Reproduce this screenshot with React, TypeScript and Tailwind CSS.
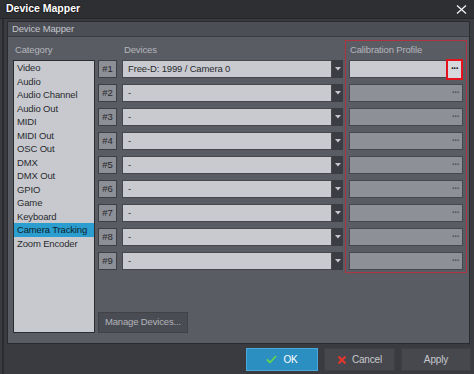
import React from 'react';

const categories = [
  'Video',
  'Audio',
  'Audio Channel',
  'Audio Out',
  'MIDI',
  'MIDI Out',
  'OSC Out',
  'DMX',
  'DMX Out',
  'GPIO',
  'Game',
  'Keyboard',
  'Camera Tracking',
  'Zoom Encoder',
];

const devices = ['Free-D: 1999 / Camera 0', '-', '-', '-', '-', '-', '-', '-', '-'];

function Dots({ className }: { className: string }) {
  return <span className={`text-[10px] leading-none tracking-[-1px] font-bold ${className}`}>···</span>;
}

function App() {
  return (
    <div className="w-[474px] h-[374px] overflow-hidden bg-[#3a3b40] flex flex-col text-[9.5px] tracking-[-0.15px] font-['Liberation_Sans',Arial,sans-serif]">
      {/* title bar */}
      <div className="h-[19px] bg-[#2e2f33] flex items-center justify-between pl-[6px] pr-[7px] border-b border-[#25262a]">
        <span className="text-white font-bold text-[10.5px] tracking-normal [text-shadow:0_0_2px_#000]">Device Mapper</span>
        <svg width="11" height="9" viewBox="0 0 11 9" className="mt-[1px]">
          <path d="M1 0.5 L10 8.5 M10 0.5 L1 8.5" stroke="#f2f2f2" strokeWidth="1.3" />
        </svg>
      </div>

      <div className="flex-1 flex flex-col border-l-2 border-[#2a2b2f] ml-[2px]">
        {/* group box */}
        <div className="mt-[2px] ml-[3px] w-[463px] h-[323px] border border-[#2a2b2f] flex flex-col">
          <div className="h-[15px] bg-[#4c4e55] border-b border-[#3a3c41] flex items-center pl-[4px] text-[#c3c5cb]">
            Device Mapper
          </div>
          <div className="flex-1 bg-[#5a5c64] flex pl-[5px] pt-[3px] pb-[10px]">
            {/* category column */}
            <div className="w-[82px] flex flex-col">
              <div className="h-[20px] flex items-center pl-[2px] text-[#b4b6bc]">Category</div>
              <div className="flex-1 bg-[#c7c9ce] border border-[#2c2d31] text-[#2a2b2f]">
                {categories.map((c) => (
                  <div
                    key={c}
                    className={`h-[13.54px] leading-[13.54px] pl-[3px] ${c === 'Camera Tracking' ? 'bg-[#2b9dcf] text-[#0f1f2a]' : ''}`}
                  >
                    {c}
                  </div>
                ))}
              </div>
            </div>

            {/* devices column */}
            <div className="w-[245px] ml-[3px] flex flex-col">
              <div className="h-[20px] flex items-center pl-[26px] text-[#b4b6bc]">Devices</div>
              <div className="flex flex-col gap-[6px]">
                {devices.map((d, i) => (
                  <div key={i} className="flex h-[18px]">
                    <div className="w-[19px] bg-[#8d8f97] border border-[#3d3f45] flex items-center justify-center text-[#26272a]">
                      #{i + 1}
                    </div>
                    <div className="ml-[5px] flex-1 bg-[#c8cacf] border border-[#46484e] flex items-center pl-[5px] text-[#2a2b2f]">
                      {d}
                    </div>
                    <div className="w-[11px] bg-[#3b3d43] flex items-center justify-center">
                      <svg width="6" height="4" viewBox="0 0 6 4">
                        <path d="M0 0 L6 0 L3 3.5 Z" fill="#c4c6cc" />
                      </svg>
                    </div>
                  </div>
                ))}
              </div>
              <div className="flex-1" />
              <div className="w-[90px] h-[21px] bg-[#4a4c53] border border-[#404248] flex items-center justify-center text-[#b2b4ba]">
                Manage Devices...
              </div>
            </div>

            {/* calibration column */}
            <div className="ml-[2px] w-[122px] h-[233px] border-[1.5px] border-[#ad3440] flex flex-col px-[3px] pb-[2px]">
              <div className="h-[19px] flex items-center pl-[1px] text-[#b4b6bc]">Calibration Profile</div>
              <div className="flex flex-col gap-[6px]">
                {devices.map((_, i) => (
                  <div
                    key={i}
                    className={`h-[18px] border border-[#46484e] flex items-center justify-end ${i === 0 ? 'bg-[#c9cbd0]' : 'bg-[#8e9098] pr-[3px]'}`}
                  >
                    {i === 0 ? (
                      <div className="w-[17px] h-[21px] -mr-[1px] border-2 border-[#e3121c] bg-[#d6d8db] flex items-center justify-center">
                        <Dots className="text-[#111]" />
                      </div>
                    ) : (
                      <Dots className="text-[#55575e]" />
                    )}
                  </div>
                ))}
              </div>
            </div>
          </div>
        </div>

        {/* buttons */}
        <div className="flex justify-end gap-[6px] pr-[3px] mt-[4px]">
          <div className="w-[72px] h-[23px] bg-[#2b8fc1] border border-[#4aa9d8] flex items-center justify-center gap-[6px] text-white text-[10px]">
            <svg width="11" height="9" viewBox="0 0 11 9">
              <path d="M1 4.5 L4 7.5 L10 1" stroke="#66d44c" strokeWidth="1.8" fill="none" />
            </svg>
            OK
          </div>
          <div className="w-[71px] h-[23px] bg-[#46484e] border border-[#3d3f44] flex items-center justify-center gap-[5px] text-[#c6c8cd] text-[10px]">
            <svg width="10" height="10" viewBox="0 0 10 10">
              <path d="M1.5 1.5 L8.5 8.5 M8.5 1.5 L1.5 8.5" stroke="#e3352c" strokeWidth="2.2" />
            </svg>
            Cancel
          </div>
          <div className="w-[70px] h-[23px] bg-[#46484e] border border-[#3d3f44] flex items-center justify-center text-[#c6c8cd] text-[10px]">
            Apply
          </div>
        </div>
      </div>
    </div>
  );
}

export default App;
